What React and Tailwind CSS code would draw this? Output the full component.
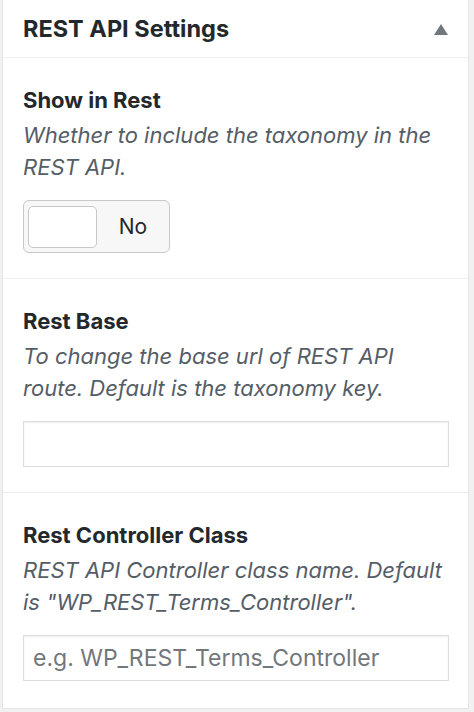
const font = { fontFamily: 'Inter, "Liberation Sans", Arial, sans-serif' };

const Field = ({ title, children, last }) => (
  <div className={`px-[20px] pt-[26px] pb-[25px] ${last ? '' : 'border-b border-[#eeeeee]'}`}>
    <h3 className="text-[22px] leading-[32px] font-bold text-[#23282d]">{title}</h3>
    {children}
  </div>
);

const Description = ({ children }) => (
  <p className="mt-[3px] text-[22px] leading-[32px] italic text-[#555d66]">{children}</p>
);

const TextInput = ({ placeholder }) => (
  <input
    type="text"
    placeholder={placeholder}
    className="mt-[17px] block w-[426px] h-[46px] px-[9px] border border-[#dddddd] bg-white text-[23px] text-[#32373c] placeholder:text-[#72777c] shadow-[inset_0_1px_2px_rgba(0,0,0,0.07)] outline-none"
    style={font}
  />
);

export default function App() {
  return (
    <div className="w-[474px] h-[712px] bg-[#f1f1f1] pl-[2px] overflow-hidden" style={font}>
      <div className="w-[467px] h-[709px] bg-white border-x border-b border-[#e5e5e5]">
        {/* Panel header */}
        <div className="h-[58px] flex items-center justify-between pl-[20px] pr-[20px] border-b border-[#eeeeee]">
          <h2 className="text-[23.5px] font-bold text-[#23282d]">REST API Settings</h2>
          <svg width="14" height="11" viewBox="0 0 14 11" className="mt-[2px]">
            <polygon points="7,0 14,11 0,11" fill="#72777c" />
          </svg>
        </div>

        <Field title="Show in Rest">
          <Description>Whether to include the taxonomy in the REST API.</Description>
          <div className="mt-[17px] w-[147px] h-[53px] rounded-[6px] border border-[#c8c8c8] bg-[#f7f7f7] flex items-center pl-[4px]">
            <div className="w-[69px] h-[42px] rounded-[5px] border border-[#c8c8c8] bg-white" />
            <span className="flex-1 text-center text-[21px] text-[#23282d]">No</span>
          </div>
        </Field>

        <Field title="Rest Base">
          <Description>To change the base url of REST API route. Default is the taxonomy key.</Description>
          <TextInput placeholder="" />
        </Field>

        <Field title="Rest Controller Class" last>
          <Description>REST API Controller class name. Default is "WP_REST_Terms_Controller".</Description>
          <TextInput placeholder="e.g. WP_REST_Terms_Controller" />
        </Field>
      </div>
    </div>
  );
}
